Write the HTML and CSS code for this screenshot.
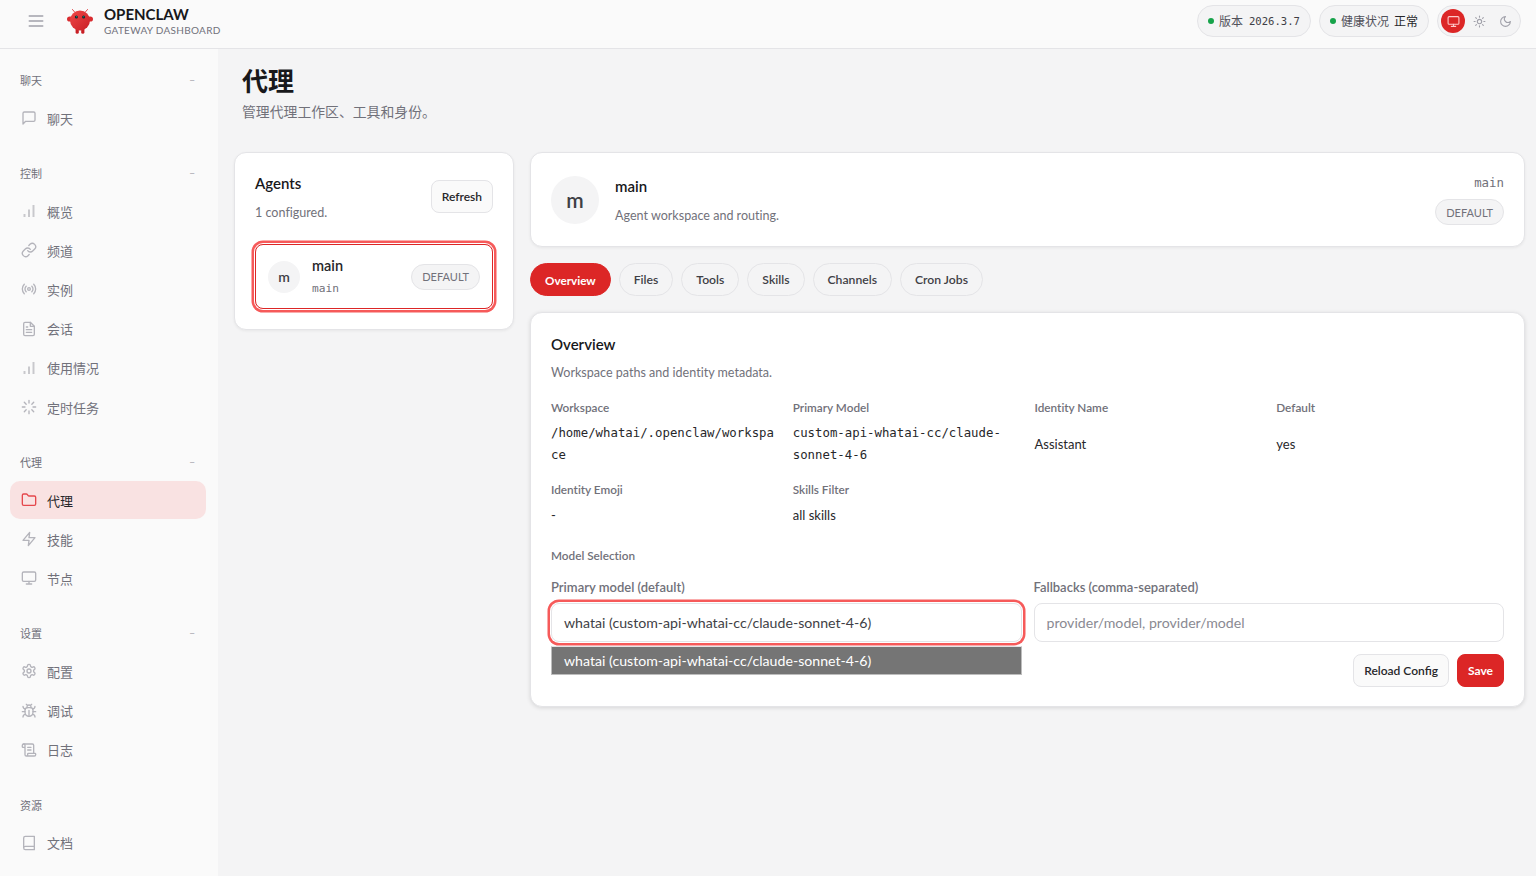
FILE: index.html
```html
<!DOCTYPE html>
<html lang="zh">
<head>
<meta charset="utf-8">
<title>OpenClaw</title>
<link rel="stylesheet" href="styles.css">
</head>
<body>
<svg class="defs" width="0" height="0" aria-hidden="true">
<defs>
<symbol id="i-msg" viewBox="0 0 24 24"><path d="M21 15a2 2 0 0 1-2 2H7l-4 4V5a2 2 0 0 1 2-2h14a2 2 0 0 1 2 2z"/></symbol>
<symbol id="i-bars" viewBox="0 0 24 24"><path d="M12 20V10M18 20V4M6 20v-4"/></symbol>
<symbol id="i-link" viewBox="0 0 24 24"><path d="M10 13a5 5 0 0 0 7.54.54l3-3a5 5 0 0 0-7.07-7.07l-1.72 1.71"/><path d="M14 11a5 5 0 0 0-7.54-.54l-3 3a5 5 0 0 0 7.07 7.07l1.71-1.71"/></symbol>
<symbol id="i-radio" viewBox="0 0 24 24"><circle cx="12" cy="12" r="2"/><path d="M4.93 19.07a10 10 0 0 1 0-14.14M7.76 16.24a6 6 0 0 1 0-8.49M16.24 7.76a6 6 0 0 1 0 8.49M19.07 4.93a10 10 0 0 1 0 14.14"/></symbol>
<symbol id="i-file" viewBox="0 0 24 24"><path d="M14 2H6a2 2 0 0 0-2 2v16a2 2 0 0 0 2 2h12a2 2 0 0 0 2-2V8z"/><path d="M14 2v6h6M16 13H8M16 17H8M10 9H8"/></symbol>
<symbol id="i-loader" viewBox="0 0 24 24"><path d="M12 2v4M12 18v4M4.93 4.93l2.83 2.83M16.24 16.24l2.83 2.83M2 12h4M18 12h4M4.93 19.07l2.83-2.83M16.24 7.76l2.83-2.83"/></symbol>
<symbol id="i-folder" viewBox="0 0 24 24"><path d="M20 20a2 2 0 0 0 2-2V8a2 2 0 0 0-2-2h-7.9a2 2 0 0 1-1.69-.9L9.6 3.9A2 2 0 0 0 7.93 3H4a2 2 0 0 0-2 2v13a2 2 0 0 0 2 2Z"/></symbol>
<symbol id="i-zap" viewBox="0 0 24 24"><path d="M13 2 3 14h9l-1 8 10-12h-9l1-8z"/></symbol>
<symbol id="i-monitor" viewBox="0 0 24 24"><rect x="2" y="3" width="20" height="14" rx="2"/><path d="M8 21h8M12 17v4"/></symbol>
<symbol id="i-gear" viewBox="0 0 24 24"><path d="M12.22 2h-.44a2 2 0 0 0-2 2v.18a2 2 0 0 1-1 1.73l-.43.25a2 2 0 0 1-2 0l-.15-.08a2 2 0 0 0-2.73.73l-.22.38a2 2 0 0 0 .73 2.73l.15.1a2 2 0 0 1 1 1.72v.51a2 2 0 0 1-1 1.74l-.15.09a2 2 0 0 0-.73 2.73l.22.38a2 2 0 0 0 2.73.73l.15-.08a2 2 0 0 1 2 0l.43.25a2 2 0 0 1 1 1.73V20a2 2 0 0 0 2 2h.44a2 2 0 0 0 2-2v-.18a2 2 0 0 1 1-1.73l.43-.25a2 2 0 0 1 2 0l.15.08a2 2 0 0 0 2.73-.73l.22-.39a2 2 0 0 0-.73-2.73l-.15-.08a2 2 0 0 1-1-1.74v-.5a2 2 0 0 1 1-1.74l.15-.09a2 2 0 0 0 .73-2.73l-.22-.38a2 2 0 0 0-2.73-.73l-.15.08a2 2 0 0 1-2 0l-.43-.25a2 2 0 0 1-1-1.73V4a2 2 0 0 0-2-2z"/><circle cx="12" cy="12" r="3"/></symbol>
<symbol id="i-bug" viewBox="0 0 24 24"><path d="m8 2 1.88 1.88M14.12 3.88 16 2M9 7.13v-1a3.003 3.003 0 1 1 6 0v1"/><path d="M12 20c-3.3 0-6-2.7-6-6v-3a4 4 0 0 1 4-4h4a4 4 0 0 1 4 4v3c0 3.3-2.7 6-6 6"/><path d="M12 20v-9M6.53 9C4.6 8.8 3 7.1 3 5M6 13H2M3 21c0-2.1 1.7-3.9 3.8-4M20.97 5c0 2.1-1.6 3.8-3.5 4M22 13h-4M17.2 17c2.1.1 3.8 1.9 3.8 4"/></symbol>
<symbol id="i-scroll" viewBox="0 0 24 24"><path d="M15 12h-5M15 8h-5M19 17V5a2 2 0 0 0-2-2H4"/><path d="M8 21h12a2 2 0 0 0 2-2v-1a1 1 0 0 0-1-1H11a1 1 0 0 0-1 1v1a2 2 0 1 1-4 0V5a2 2 0 1 0-4 0v2a1 1 0 0 0 1 1h3"/></symbol>
<symbol id="i-book" viewBox="0 0 24 24"><path d="M4 19.5v-15A2.5 2.5 0 0 1 6.5 2H20v20H6.5a2.5 2.5 0 0 1 0-5H20"/></symbol>
<symbol id="i-sun" viewBox="0 0 24 24"><circle cx="12" cy="12" r="4"/><path d="M12 2v2M12 20v2M4.93 4.93l1.41 1.41M17.66 17.66l1.41 1.41M2 12h2M20 12h2M6.34 17.66l-1.41 1.41M19.07 4.93l-1.41 1.41"/></symbol>
<symbol id="i-moon" viewBox="0 0 24 24"><path d="M12 3a6 6 0 0 0 9 9 9 9 0 1 1-9-9Z"/></symbol>
<symbol id="i-menu" viewBox="0 0 24 24"><path d="M4 6h16M4 12h16M4 18h16"/></symbol>
</defs>
</svg>

<header class="topbar">
  <div class="brand-side">
    <button class="menu-btn" type="button"><svg class="ic ic-menu"><use href="#i-menu"/></svg></button>
    <svg class="logo" viewBox="0 0 28 28">
      <defs><linearGradient id="lg" x1="0" y1="0" x2="1" y2="1"><stop offset="0" stop-color="#f04848"/><stop offset="1" stop-color="#c81e24"/></linearGradient></defs>
      <path d="M9 5.5 6.5 2.5M19 5.5l2.5-3" class="logo-ant"/>
      <ellipse cx="3.8" cy="12" rx="2.8" ry="2.6" fill="#d92c30"/>
      <ellipse cx="24.2" cy="12" rx="2.8" ry="2.6" fill="#d92c30"/>
      <rect x="9.6" y="21" width="3.2" height="5.8" rx="1.6" fill="#c81e24"/>
      <rect x="15.2" y="21" width="3.2" height="5.8" rx="1.6" fill="#c81e24"/>
      <circle cx="14" cy="13.5" r="10" fill="url(#lg)"/>
      <circle cx="10.4" cy="10" r="1.5" fill="#0b2a2c"/>
      <circle cx="17.6" cy="10" r="1.5" fill="#0b2a2c"/>
      <circle cx="10.6" cy="9.7" r=".5" fill="#18c8c0"/>
      <circle cx="17.8" cy="9.7" r=".5" fill="#18c8c0"/>
    </svg>
    <div class="brand-text">
      <div class="brand-name">OPENCLAW</div>
      <div class="brand-sub">GATEWAY DASHBOARD</div>
    </div>
  </div>
  <div class="top-right">
    <div class="chip"><span class="dot"></span><span class="chip-label">版本</span><span class="chip-mono">2026.3.7</span></div>
    <div class="chip"><span class="dot"></span><span class="chip-label">健康状况</span><span class="chip-value">正常</span></div>
    <div class="theme">
      <span class="theme-opt theme-on"><svg class="ic ic-theme"><use href="#i-monitor"/></svg></span>
      <span class="theme-opt"><svg class="ic ic-theme"><use href="#i-sun"/></svg></span>
      <span class="theme-opt"><svg class="ic ic-theme"><use href="#i-moon"/></svg></span>
    </div>
  </div>
</header>

<div class="shell">
  <nav class="sidebar">
    <section class="nav-group">
      <div class="nav-label"><span>聊天</span><span class="minus">−</span></div>
      <a class="nav-item"><svg class="ic"><use href="#i-msg"/></svg><span>聊天</span></a>
    </section>
    <section class="nav-group">
      <div class="nav-label"><span>控制</span><span class="minus">−</span></div>
      <a class="nav-item"><svg class="ic ic-bars"><use href="#i-bars"/></svg><span>概览</span></a>
      <a class="nav-item"><svg class="ic"><use href="#i-link"/></svg><span>频道</span></a>
      <a class="nav-item"><svg class="ic"><use href="#i-radio"/></svg><span>实例</span></a>
      <a class="nav-item"><svg class="ic"><use href="#i-file"/></svg><span>会话</span></a>
      <a class="nav-item"><svg class="ic ic-bars"><use href="#i-bars"/></svg><span>使用情况</span></a>
      <a class="nav-item"><svg class="ic"><use href="#i-loader"/></svg><span>定时任务</span></a>
    </section>
    <section class="nav-group">
      <div class="nav-label"><span>代理</span><span class="minus">−</span></div>
      <a class="nav-item nav-active"><svg class="ic"><use href="#i-folder"/></svg><span>代理</span></a>
      <a class="nav-item"><svg class="ic"><use href="#i-zap"/></svg><span>技能</span></a>
      <a class="nav-item"><svg class="ic"><use href="#i-monitor"/></svg><span>节点</span></a>
    </section>
    <section class="nav-group">
      <div class="nav-label"><span>设置</span><span class="minus">−</span></div>
      <a class="nav-item"><svg class="ic"><use href="#i-gear"/></svg><span>配置</span></a>
      <a class="nav-item"><svg class="ic"><use href="#i-bug"/></svg><span>调试</span></a>
      <a class="nav-item"><svg class="ic"><use href="#i-scroll"/></svg><span>日志</span></a>
    </section>
    <section class="nav-group">
      <div class="nav-label"><span>资源</span></div>
      <a class="nav-item"><svg class="ic"><use href="#i-book"/></svg><span>文档</span></a>
    </section>
  </nav>

  <main class="main">
    <div class="page-head">
      <h1 class="page-title">代理</h1>
      <p class="page-sub">管理代理工作区、工具和身份。</p>
    </div>
    <div class="columns">
      <aside class="card agents-card">
        <div class="agents-head">
          <div>
            <div class="card-title">Agents</div>
            <div class="card-sub agents-count">1 configured.</div>
          </div>
          <button class="btn" type="button">Refresh</button>
        </div>
        <div class="agent-row">
          <span class="avatar avatar-sm">m</span>
          <div class="agent-info">
            <div class="agent-name">main</div>
            <div class="agent-id">main</div>
          </div>
          <span class="pill">DEFAULT</span>
        </div>
      </aside>

      <div class="detail">
        <div class="card hero">
          <span class="avatar avatar-lg">m</span>
          <div class="hero-info">
            <div class="hero-name">main</div>
            <div class="card-sub hero-sub">Agent workspace and routing.</div>
          </div>
          <div class="hero-meta">
            <div class="hero-id">main</div>
            <span class="pill">DEFAULT</span>
          </div>
        </div>

        <div class="tabs">
          <button class="tab tab-on" type="button">Overview</button>
          <button class="tab" type="button">Files</button>
          <button class="tab" type="button">Tools</button>
          <button class="tab" type="button">Skills</button>
          <button class="tab" type="button">Channels</button>
          <button class="tab" type="button">Cron Jobs</button>
        </div>

        <section class="card overview">
          <div class="card-title">Overview</div>
          <div class="card-sub overview-sub">Workspace paths and identity metadata.</div>
          <div class="kv-grid">
            <div class="kv"><div class="kv-label">Workspace</div><div class="kv-val mono">/home/whatai/.openclaw/workspace</div></div>
            <div class="kv"><div class="kv-label">Primary Model</div><div class="kv-val mono">custom-api-whatai-cc/claude-sonnet-4-6</div></div>
            <div class="kv"><div class="kv-label">Identity Name</div><div class="kv-val">Assistant</div></div>
            <div class="kv"><div class="kv-label">Default</div><div class="kv-val">yes</div></div>
            <div class="kv"><div class="kv-label">Identity Emoji</div><div class="kv-val">-</div></div>
            <div class="kv"><div class="kv-label">Skills Filter</div><div class="kv-val">all skills</div></div>
          </div>
          <div class="kv-label model-head">Model Selection</div>
          <div class="form-grid">
            <div class="field">
              <label class="field-label" for="pm">Primary model (default)</label>
              <div class="input input-focus" id="pm">whatai (custom-api-whatai-cc/claude-sonnet-4-6)</div>
              <div class="popup">whatai (custom-api-whatai-cc/claude-sonnet-4-6)</div>
            </div>
            <div class="field">
              <label class="field-label" for="fb">Fallbacks (comma-separated)</label>
              <div class="input input-ph" id="fb">provider/model, provider/model</div>
            </div>
          </div>
          <div class="actions">
            <button class="btn" type="button">Reload Config</button>
            <button class="btn btn-red" type="button">Save</button>
          </div>
        </section>
      </div>
    </div>
  </main>
</div>
</body>
</html>
```
FILE: styles.css
```css
* { box-sizing: border-box; }
html, body { height: 100%; }
body {
  margin: 0;
  background: #f4f4f5;
  color: #27272a;
  font-family: Lato, "Noto Sans CJK SC", sans-serif;
  font-size: 13px;
  font-variant-ligatures: none;
  overflow: hidden;
}
.defs { position: absolute; }
.ic {
  width: 16px; height: 16px;
  fill: none; stroke: currentColor; stroke-width: 2;
  stroke-linecap: round; stroke-linejoin: round;
  flex: none;
}
.topbar {
  height: 49px;
  background: #fafafa;
  border-bottom: 1px solid #e4e4e7;
  display: flex; align-items: center; justify-content: space-between;
  padding: 0 15px 6px 26px;
}
.brand-side { display: flex; align-items: center; }
.menu-btn { border: 0; background: none; padding: 0; width: 20px; height: 20px; color: #a1a1aa; display: flex; }
.ic-menu { width: 20px; height: 20px; }
.logo { width: 28px; height: 28px; margin-left: 20px; }
.logo-ant { fill: none; stroke: #e0474a; stroke-width: 1; stroke-linecap: round; }
.brand-text { margin-left: 10px; }
.brand-name { font-size: 15px; font-weight: 700; line-height: 16px; color: #18181b; }
.brand-sub { font-size: 10px; line-height: 13px; margin-top: 2px; color: #71717a; letter-spacing: .3px; }
.top-right { display: flex; align-items: center; gap: 8px; }
.chip {
  height: 32px; display: flex; align-items: center;
  padding: 0 10px 1px; border: 1px solid #e4e4e7; border-radius: 16px;
  background: #f4f4f5; font-size: 12px; color: #52525b;
}
.dot { width: 6px; height: 6px; border-radius: 50%; background: #16a34a; margin-right: 5px; }
.chip-mono { font-family: "DejaVu Sans Mono", monospace; font-size: 10.6px; margin-left: 6px; color: #3f3f46; }
.chip-value { margin-left: 5px; color: #27272a; }
.theme { height: 32px; display: flex; align-items: center; gap: 2px; padding: 0 3px; border: 1px solid #e4e4e7; border-radius: 16px; background: #f4f4f5; }
.theme-opt { width: 24px; height: 24px; border-radius: 50%; display: flex; align-items: center; justify-content: center; color: #a1a1aa; }
.theme-on { background: #dc2626; color: #fecaca; }
.ic-theme { width: 13px; height: 13px; }

.shell { display: flex; height: calc(100vh - 49px); }
.sidebar { width: 218px; flex: none; background: #fafafa; padding: 19px 12px 0 10px; }
.nav-group { margin-bottom: 23.9px; }
.nav-label { height: 24px; display: flex; align-items: center; justify-content: space-between; padding: 0 11px 0 10px; font-size: 11px; color: #71717a; margin-bottom: 7.1px; }
.minus { color: #a1a1aa; font-size: 10px; }
.nav-item { height: 38px; margin-bottom: 1.2px; display: flex; align-items: center; gap: 10px; padding: 0 11px; border-radius: 10px; color: #71717a; font-size: 13px; }
.nav-item .ic { color: #b4b4bb; }
.nav-item .ic-bars { width: 18px; height: 18px; margin: 0 -1px; stroke-width: 2.6; stroke-linecap: butt; color: #c8c8cc; }
.nav-active { background: #f9e2e2; color: #27272a; }
.nav-active .ic { color: #e5484d; }

.main { flex: 1; min-width: 0; padding: 15px 11px 0 16px; }
.page-head { padding-left: 8px; height: 88px; }
.page-title { margin: 0; font-size: 26px; font-weight: 700; line-height: 34px; color: #18181b; }
.page-sub { margin: 4px 0 0; font-size: 13.85px; line-height: 20px; color: #71717a; }
.columns { display: grid; grid-template-columns: 280px 1fr; gap: 16px; align-items: start; }
.card { background: #fff; border: 1px solid #e4e4e7; border-radius: 12px; box-shadow: 0 1px 3px rgba(0,0,0,.06); }
.card-title { font-size: 15px; font-weight: 600; line-height: 20px; color: #18181b; }
.card-sub { font-size: 12.55px; line-height: 18px; color: #71717a; }
.agents-card { padding: 20px 20px 20px; height: 178px; }
.agents-head { display: flex; justify-content: space-between; align-items: flex-start; }
.agents-count { margin-top: 11px; }
.btn { height: 33px; padding: 0 10px; border: 1px solid #e4e4e7; border-radius: 8px; background: #fafafa; color: #27272a; font: 600 12px Lato, sans-serif; margin-top: 7px; }
.btn-red { background: #dc2626; border-color: #dc2626; color: #fff; font-weight: 700; }
.agent-row {
  height: 65px; margin: 22px 0 0; display: flex; align-items: center; padding: 0 12px;
  border: 1px solid #dc2626; border-radius: 8px; box-shadow: 0 0 0 1px #fff, 0 0 0 3.5px #f65a5a;
}
.avatar { display: flex; align-items: center; justify-content: center; border-radius: 50%; background: #f4f4f5; color: #3f3f46; font-weight: 600; flex: none; }
.avatar-sm { width: 32px; height: 32px; font-size: 14px; }
.avatar-lg { width: 48px; height: 48px; font-size: 21px; }
.agent-info { margin-left: 12px; flex: 1; }
.agent-name { font-size: 14.5px; font-weight: 600; line-height: 18px; color: #27272a; }
.agent-id { font: 11.2px/14px "DejaVu Sans Mono", monospace; color: #71717a; margin-top: 7px; }
.pill { height: 26px; display: inline-flex; align-items: center; padding: 0 10px; border: 1px solid #e4e4e7; border-radius: 13px; background: #f4f4f5; font-size: 11px; color: #71717a; }

.detail { min-width: 0; }
.hero { height: 95px; display: flex; align-items: center; padding: 0 20px; }
.hero-info { margin-left: 16px; flex: 1; padding-top: 2px; }
.hero-name { font-size: 15px; font-weight: 600; line-height: 18px; color: #18181b; }
.hero-sub { margin-top: 12px; }
.hero-meta { display: flex; flex-direction: column; align-items: flex-end; gap: 8px; padding-top: 1px; }
.hero-id { font: 12.4px/16px "DejaVu Sans Mono", monospace; color: #71717a; }
.tabs { display: flex; gap: 8px; margin: 16px 0; }
.tab { height: 33px; padding: 0 14px; border: 1px solid #e4e4e7; border-radius: 17px; background: #f4f4f5; color: #3f3f46; font: 600 12.2px Lato, sans-serif; }
.tab-on { background: #dc2626; border-color: #dc2626; color: #fff; font-weight: 700; font-size: 11.7px; }
.overview { padding: 21px 20px 0; height: 395px; box-shadow: 0 1px 4px rgba(0,0,0,.12); }
.overview-sub { margin-top: 10px; }
.kv-grid { display: grid; grid-template-columns: repeat(4, 1fr); column-gap: 14px; row-gap: 16px; margin-top: 18px; }
.kv { display: flex; flex-direction: column; min-width: 0; }
.kv-label { font-size: 11.75px; line-height: 16px; color: #71717a; font-weight: 600; }
.kv-val { flex: 1; display: flex; align-items: center; margin-top: 6px; font-size: 13px; line-height: 22px; color: #27272a; }
.mono { font-family: "DejaVu Sans Mono", monospace; font-size: 12.35px; overflow-wrap: anywhere; }
.model-head { margin-top: 22px; }
.form-grid { display: grid; grid-template-columns: 1fr 1fr; gap: 12px; margin-top: 15px; }
.field { position: relative; }
.field-label { display: block; font-size: 13px; line-height: 16px; font-weight: 600; color: #71717a; margin-bottom: 8px; }
.input { height: 39px; border: 1px solid #e4e4e7; border-radius: 8px; padding: 0 12px; display: flex; align-items: center; font-size: 14.15px; color: #3f3f46; background: #fff; }
.input-focus { box-shadow: 0 0 0 1px #fff, 0 0 0 3.5px #f65a5a; }
.input-ph { color: #8a8a92; }
.popup { position: absolute; left: 0; top: 67px; width: 471px; height: 29px; background: #757575; color: #fff; border: 1px solid #bdbdbd; border-top-color: #e4e4e7; padding: 0 12px; display: flex; align-items: center; font-size: 14.15px; z-index: 2; }
.actions { display: flex; justify-content: flex-end; gap: 8px; margin-top: 5px; }
```
